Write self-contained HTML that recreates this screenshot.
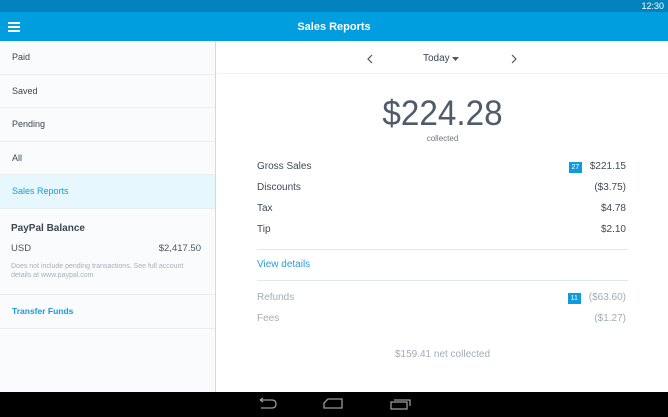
<!DOCTYPE html>
<html><head><style>
*{margin:0;padding:0;box-sizing:border-box}
body{width:668px;height:417px;overflow:hidden;font-family:"Liberation Sans",sans-serif;background:#fff;position:relative;color:#3e4a59}
.abs{position:absolute}
.status{left:0;top:0;width:668px;height:12px;background:#0383be;color:#fff;font-size:9px;text-align:right;padding-right:4px;line-height:12px}
.bar{left:0;top:12px;width:668px;height:29px;background:#009ddf;color:#fff;font-size:11px;font-weight:bold;text-align:center;line-height:30px}
.side{left:0;top:41px;width:216px;height:351px;background:#f9fbfd;border-right:1px solid #c9dceb}
.item{height:33.6px;border-bottom:1px solid #e9eef3;font-size:9px;line-height:33px;padding-left:12px;color:#3b4652}
.nav{left:0;top:392px;width:668px;height:25px;background:#000}
.row{position:absolute;left:257px;width:371px;font-size:10px}
.row .r{position:absolute;right:2px;top:0}
.badge{display:inline-block;background:#0f9be0;color:#fff;font-size:7px;width:13px;height:11px;line-height:11px;text-align:center;margin-right:8px;vertical-align:0px}
.hr{position:absolute;left:257px;width:371px;height:1px;background:#dfe8ef}
</style></head><body>
<div class="abs status">12:30</div>
<div class="abs bar">Sales Reports</div>
<div class="abs" style="left:8px;top:22px;width:12px;height:2px;background:#fff;box-shadow:0 4px 0 #fff,0 8px 0 #fff"></div>
<div class="abs side">
<div class="item">Paid</div>
<div class="item">Saved</div>
<div class="item">Pending</div>
<div class="item">All</div>
<div class="item" style="background:#e6f7fd;color:#1c9ad8">Sales Reports</div>
<div style="height:86px;border-bottom:1px solid #e9eef3;padding:14px 14px 0 11px;position:relative">
<div style="font-size:10px;font-weight:bold;color:#3b4652">PayPal Balance</div>
<div style="font-size:9.5px;margin-top:9px;color:#4a5563">USD<span style="float:right">$2,417.50</span></div>
<div style="font-size:7px;color:#a6b0ba;margin-top:8px;line-height:9px">Does not include pending transactions. See full account details at www.paypal.com</div>
</div>
<div class="item" style="color:#1c9ad8;font-weight:bold;font-size:8.5px">Transfer Funds</div>
</div>
<div class="hr" style="left:217px;width:451px;top:73px;background:#f0f3f6"></div>
<svg class="abs" style="left:366px;top:54px" width="8" height="10"><path d="M6 1L2 5L6 9" stroke="#555" fill="none" stroke-width="1.2"/></svg>
<svg class="abs" style="left:510px;top:54px" width="8" height="10"><path d="M2 1L6 5L2 9" stroke="#555" fill="none" stroke-width="1.2"/></svg>
<div class="abs" style="left:423px;top:53px;font-size:10px;color:#3b4652">Today</div>
<svg class="abs" style="left:452px;top:57px" width="7" height="4"><path d="M0 0H7L3.5 4Z" fill="#555"/></svg>
<div class="abs" style="left:217px;width:451px;top:94px;text-align:center;font-size:35px;color:#4e5b6c;transform:scaleX(.95)">$224.28</div>
<div class="abs" style="left:217px;width:451px;top:134px;text-align:center;font-size:8px;color:#6b7682">collected</div>
<div class="row" style="top:161px">Gross Sales<span class="r"><span class="badge">27</span>$221.15</span></div>
<div class="row" style="top:182px">Discounts<span class="r">($3.75)</span></div>
<div class="row" style="top:203px">Tax<span class="r">$4.78</span></div>
<div class="row" style="top:224px">Tip<span class="r">$2.10</span></div>
<div class="hr" style="top:249px"></div>
<div class="row" style="top:259px;color:#2a9ddc">View details</div>
<div class="hr" style="top:280px"></div>
<div class="row" style="top:292px;color:#a2acb7">Refunds<span class="r"><span class="badge">11</span>($63.60)</span></div>
<div class="row" style="top:313px;color:#a2acb7">Fees<span class="r">($1.27)</span></div>
<div class="abs" style="left:217px;width:451px;top:349px;text-align:center;font-size:10px;color:#a2acb7">$159.41 net collected</div>
<div class="abs nav"></div>
<svg class="abs" style="left:256px;top:397px" width="24" height="14"><path d="M4 3H16Q20 3 20 7Q20 11 16 11H5M4 3L7 1M4 3L7 5" stroke="#999" fill="none" stroke-width="1.3"/></svg>
<svg class="abs" style="left:322px;top:398px" width="24" height="12"><path d="M2 10V5L6 1H20V10Z" stroke="#999" fill="none" stroke-width="1.3"/></svg>
<svg class="abs" style="left:390px;top:398px" width="22" height="12"><rect x="1" y="4" width="16" height="7" stroke="#999" fill="none" stroke-width="1.3"/><path d="M4 2H20V8" stroke="#999" fill="none" stroke-width="1.3"/></svg>
</body></html>
